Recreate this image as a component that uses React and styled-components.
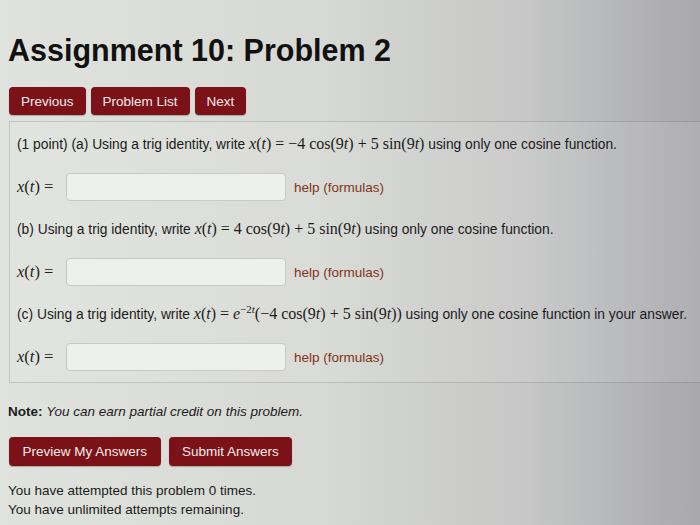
import React from "react";
import styled, { createGlobalStyle } from "styled-components";

const Global = createGlobalStyle`
  html, body {
    margin: 0;
    padding: 0;
  }
  body {
    width: 700px;
    height: 525px;
    overflow: hidden;
    font-family: "Liberation Sans", Arial, sans-serif;
    color: #1b1b1b;
    background: linear-gradient(90deg, #e0e3dd 0%, #d7d9d4 45%, #c6c7c6 75%, #a8a8ad 100%);
  }
`;

const Page = styled.div`
  padding: 32px 0 0 8px;
  display: flex;
  flex-direction: column;
`;

const Title = styled.h1`
  margin: 0;
  font-size: 30.5px;
  line-height: 36px;
  font-weight: 700;
  color: #111;
`;

const Row = styled.div`
  display: flex;
  gap: ${(p) => p.$gap || 5}px;
  margin-top: ${(p) => p.$top || 0}px;
  padding-left: 1px;
`;

const Button = styled.button`
  height: ${(p) => p.$h || 28}px;
  padding: 0 ${(p) => p.$pad || 12}px;
  border: none;
  border-radius: 4px;
  background: #7b1218;
  color: #f4ecec;
  font-family: "Liberation Sans", Arial, sans-serif;
  font-size: 13.5px;
  box-shadow: 0 1px 1px rgba(0, 0, 0, 0.25);
`;

const Problem = styled.div`
  margin-top: 6px;
  margin-left: 1px;
  border: 1px solid rgba(0, 0, 0, 0.13);
  border-right: none;
  background: rgba(255, 255, 255, 0.08);
  padding: 13px 8px 11px 7px;
  display: flex;
  flex-direction: column;
  gap: 19px;
`;

const Text = styled.div`
  font-size: 13.8px;
  line-height: 18px;
  white-space: nowrap;
`;

const M = styled.span`
  font-family: "Liberation Serif", "Times New Roman", serif;
  font-size: 16px;
  font-style: ${(p) => (p.$i ? "italic" : "normal")};
`;

const Sup = styled.sup`
  font-family: "Liberation Serif", "Times New Roman", serif;
  font-size: 11px;
  vertical-align: 6px;
  line-height: 0;
`;

const AnswerRow = styled.div`
  display: flex;
  align-items: center;
  height: 28px;
`;

const Label = styled.span`
  font-family: "Liberation Serif", "Times New Roman", serif;
  font-size: 16.5px;
  width: 49px;
  color: #222;
`;

const Input = styled.input`
  width: 220px;
  height: 28px;
  box-sizing: border-box;
  border: 1px solid #c9cac7;
  border-radius: 4px;
  background: #eef0ec;
  margin-right: 8px;
`;

const Help = styled.a`
  color: #7e3518;
  font-size: 13.5px;
  text-decoration: none;
`;

const Note = styled.div`
  margin-top: 20px;
  font-size: 13.5px;
  line-height: 18px;
  b {
    font-weight: 700;
  }
  i {
    font-style: italic;
  }
`;

const Info = styled.div`
  margin-top: 15px;
  font-size: 13.5px;
  line-height: 19px;
`;

const Eq = ({ children }) => <M>{children}</M>;

const X = () => (
  <>
    <M $i>x</M>
    <M>(</M>
    <M $i>t</M>
    <M>)</M>
  </>
);

const Answer = () => (
  <AnswerRow>
    <Label>
      <i>x</i>(<i>t</i>) =
    </Label>
    <Input />
    <Help href="#">help (formulas)</Help>
  </AnswerRow>
);

export default function App() {
  return (
    <>
      <Global />
      <Page>
        <Title>Assignment 10: Problem 2</Title>
        <Row $top={19}>
          <Button>Previous</Button>
          <Button>Problem List</Button>
          <Button>Next</Button>
        </Row>
        <Problem>
          <Text>
            (1 point) (a) Using a trig identity, write <X /> <Eq>= −4 cos(9</Eq>
            <M $i>t</M>
            <Eq>) + 5 sin(9</Eq>
            <M $i>t</M>
            <Eq>)</Eq> using only one cosine function.
          </Text>
          <Answer />
          <Text>
            (b) Using a trig identity, write <X /> <Eq>= 4 cos(9</Eq>
            <M $i>t</M>
            <Eq>) + 5 sin(9</Eq>
            <M $i>t</M>
            <Eq>)</Eq> using only one cosine function.
          </Text>
          <Answer />
          <Text>
            (c) Using a trig identity, write <X /> <Eq>= </Eq>
            <M $i>e</M>
            <Sup>
              −2<i>t</i>
            </Sup>
            <Eq>(−4 cos(9</Eq>
            <M $i>t</M>
            <Eq>) + 5 sin(9</Eq>
            <M $i>t</M>
            <Eq>))</Eq> using only one cosine function in your answer.
          </Text>
          <Answer />
        </Problem>
        <Note>
          <b>Note:</b> <i>You can earn partial credit on this problem.</i>
        </Note>
        <Row $top={16} $gap={8}>
          <Button $h={29} $pad={13.5}>Preview My Answers</Button>
          <Button $h={29} $pad={13.5}>Submit Answers</Button>
        </Row>
        <Info>
          You have attempted this problem 0 times.
          <br />
          You have unlimited attempts remaining.
        </Info>
      </Page>
    </>
  );
}
